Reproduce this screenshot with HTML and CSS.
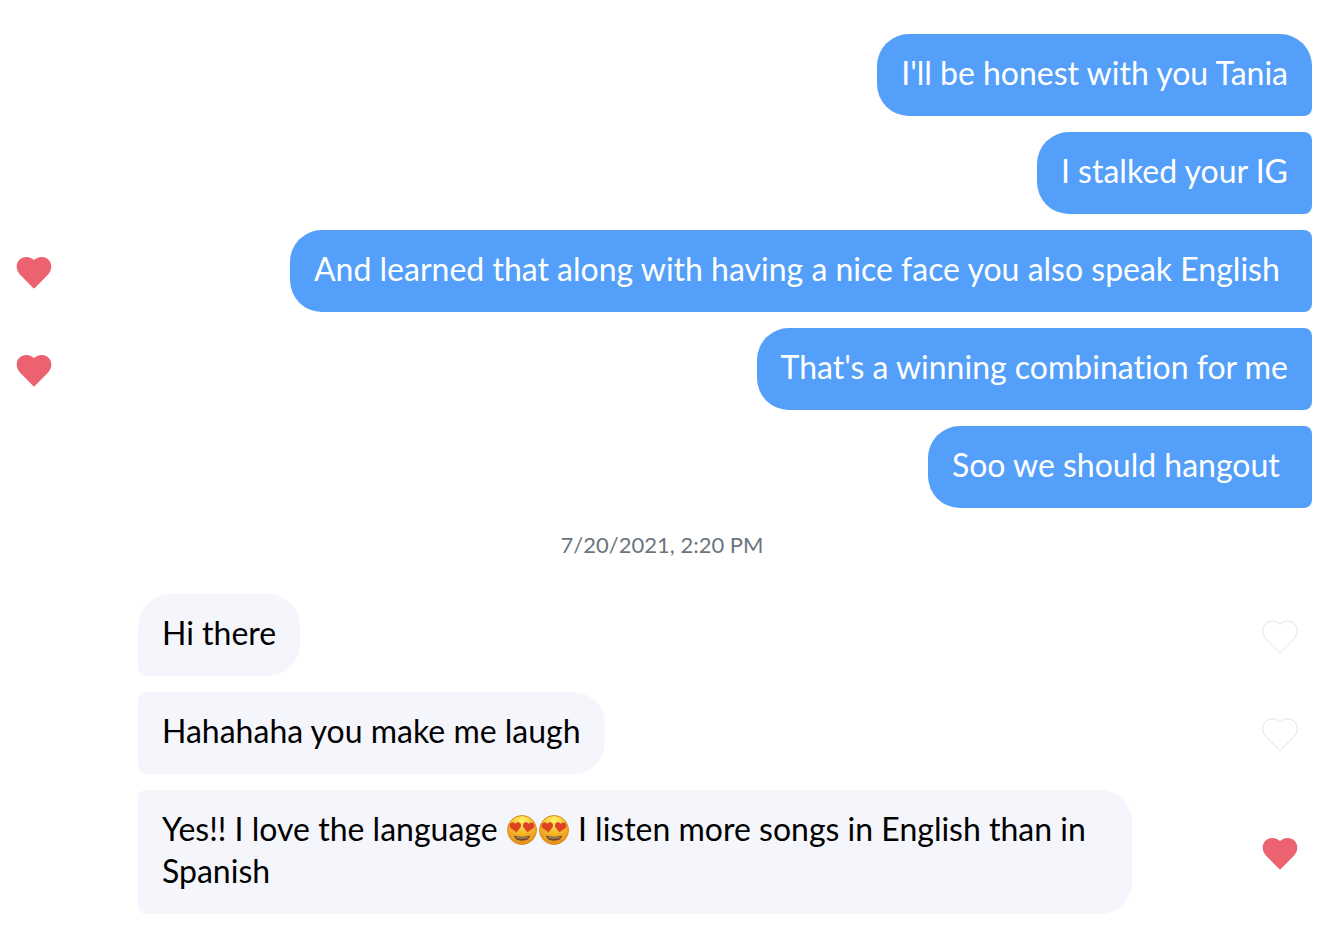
FILE: index.html
```html
<!DOCTYPE html>
<html lang="en">
<head>
    <meta charset="UTF-8">
    <meta name="viewport" content="width=device-width, initial-scale=1.0">
    <title>Messages</title>
    <link rel="stylesheet" href="styles.css">
</head>
<body>
    <!-- Shared icons -->
    <svg class="icon-defs" aria-hidden="true">
        <defs>
            <radialGradient id="face" cx="50%" cy="18%" r="85%">
                <stop offset="0" stop-color="#fff56b"/>
                <stop offset="0.45" stop-color="#f5bd2c"/>
                <stop offset="1" stop-color="#e58a17"/>
            </radialGradient>
            <symbol id="heart" viewBox="0 0 36 34">
                <path d="M18 4C15.800 2 13.200 1 10.400 1C4.900 1 .7 5.100 .7 10.500C.7 13.900 2.100 16.700 4.600 19.300L17.200 32.100Q18 32.800 18.800 32.100L31.400 19.300C33.900 16.700 35.300 13.900 35.300 10.500C35.300 5.100 31.100 1 25.600 1C22.800 1 20.200 2 18 4Z"/>
            </symbol>
            <symbol id="heart-eyes" viewBox="0 0 30 30">
                <circle cx="15" cy="15" r="14.500" fill="url(#face)" stroke="#d98a22"/>
                <path d="M9.500 17.300L3.800 13.300C1.600 11 2.400 7.500 5.700 7.400C7 7.400 7.800 8 8.300 8.900C9.200 7.300 11.200 6.700 12.700 7.700C14.500 8.900 14.300 11.300 13 13Z" fill="#dc4323"/>
                <path d="M20.500 17.300L26.200 13.300C28.400 11 27.600 7.500 24.300 7.400C23 7.400 22.200 8 21.700 8.900C20.800 7.300 18.800 6.700 17.300 7.700C15.500 8.900 15.700 11.300 17 13Z" fill="#dc4323"/>
                <path d="M7 20.600C12 22.200 18 22.200 23 20.600C22.300 24 19.200 25.800 15 25.800S7.700 24 7 20.600Z" fill="#70442a"/>
                <path d="M9 21.900Q15 23.200 21 21.900L20.300 22.900Q15 24 9.700 22.900Z" fill="#b79c82"/>
            </symbol>
        </defs>
    </svg>

    <main class="chat">
        <div class="message sent">
            <p class="bubble first">I'll be honest with you Tania</p>
        </div>
        <div class="message sent">
            <p class="bubble">I stalked your IG</p>
        </div>
        <div class="message sent">
            <button class="like liked" type="button" aria-label="Liked"><svg class="heart"><use href="#heart"/></svg></button>
            <p class="bubble">And learned that along with having a nice face you also speak English </p>
        </div>
        <div class="message sent">
            <button class="like liked" type="button" aria-label="Liked"><svg class="heart"><use href="#heart"/></svg></button>
            <p class="bubble">That's a winning combination for me</p>
        </div>
        <div class="message sent">
            <p class="bubble">Soo we should hangout </p>
        </div>

        <time class="timestamp" datetime="2021-07-20T14:20">7/20/2021, 2:20 PM</time>

        <div class="message received">
            <p class="bubble first">Hi there</p>
            <button class="like" type="button" aria-label="Like"><svg class="heart"><use href="#heart"/></svg></button>
        </div>
        <div class="message received">
            <p class="bubble">Hahahaha you make me laugh</p>
            <button class="like" type="button" aria-label="Like"><svg class="heart"><use href="#heart"/></svg></button>
        </div>
        <div class="message received">
            <p class="bubble">Yes!! I love the language <svg class="emoji" role="img" aria-label="heart eyes"><use href="#heart-eyes"/></svg><svg class="emoji" role="img" aria-label="heart eyes"><use href="#heart-eyes"/></svg> I listen more songs in English than in Spanish</p>
            <button class="like liked" type="button" aria-label="Liked"><svg class="heart"><use href="#heart"/></svg></button>
        </div>
    </main>
</body>
</html>
```

FILE: styles.css
```css
* {
    box-sizing: border-box;
}
body {
    margin: 0;
    background: #fff;
    color: #000;
    font-family: Lato, "Liberation Sans", sans-serif;
    font-size: 32px;
    line-height: 42px;
    font-variant-ligatures: none;
}
.icon-defs {
    position: absolute;
    width: 0;
    height: 0;
}
.chat {
    display: flex;
    flex-direction: column;
    gap: 16px;
    padding: 34px 27px 15px 16px;
}
.message {
    display: flex;
    align-items: center;
    justify-content: space-between;
}
.bubble {
    margin: 0;
    padding: 18px 24px 22px;
    white-space: pre-wrap;
}
.sent .bubble {
    margin-left: auto;
    background: #549ff9;
    color: #fff;
    border-radius: 32px 8px 8px 32px;
}
.sent .bubble.first {
    border-top-right-radius: 32px;
}
.received {
    padding-left: 122px;
    padding-right: 14px;
}
.received .bubble {
    max-width: 994px;
    background: #f5f6fc;
    border-radius: 8px 32px 32px 8px;
}
.received .bubble.first {
    border-top-left-radius: 32px;
}
.like {
    flex: none;
    padding: 4px 0 0;
    border: 0;
    background: none;
    cursor: pointer;
}
.heart {
    display: block;
    width: 36px;
    height: 34px;
    fill: #fff;
    stroke: #e0e2e8;
    stroke-width: 1;
}
.liked .heart {
    fill: #ec6270;
    stroke: none;
}
.emoji {
    width: 30px;
    height: 30px;
    margin: 0 1px;
    vertical-align: -4px;
}
.timestamp {
    align-self: center;
    padding: 0 4px 12px 0;
    color: #6c757e;
    font-size: 22px;
}
```
